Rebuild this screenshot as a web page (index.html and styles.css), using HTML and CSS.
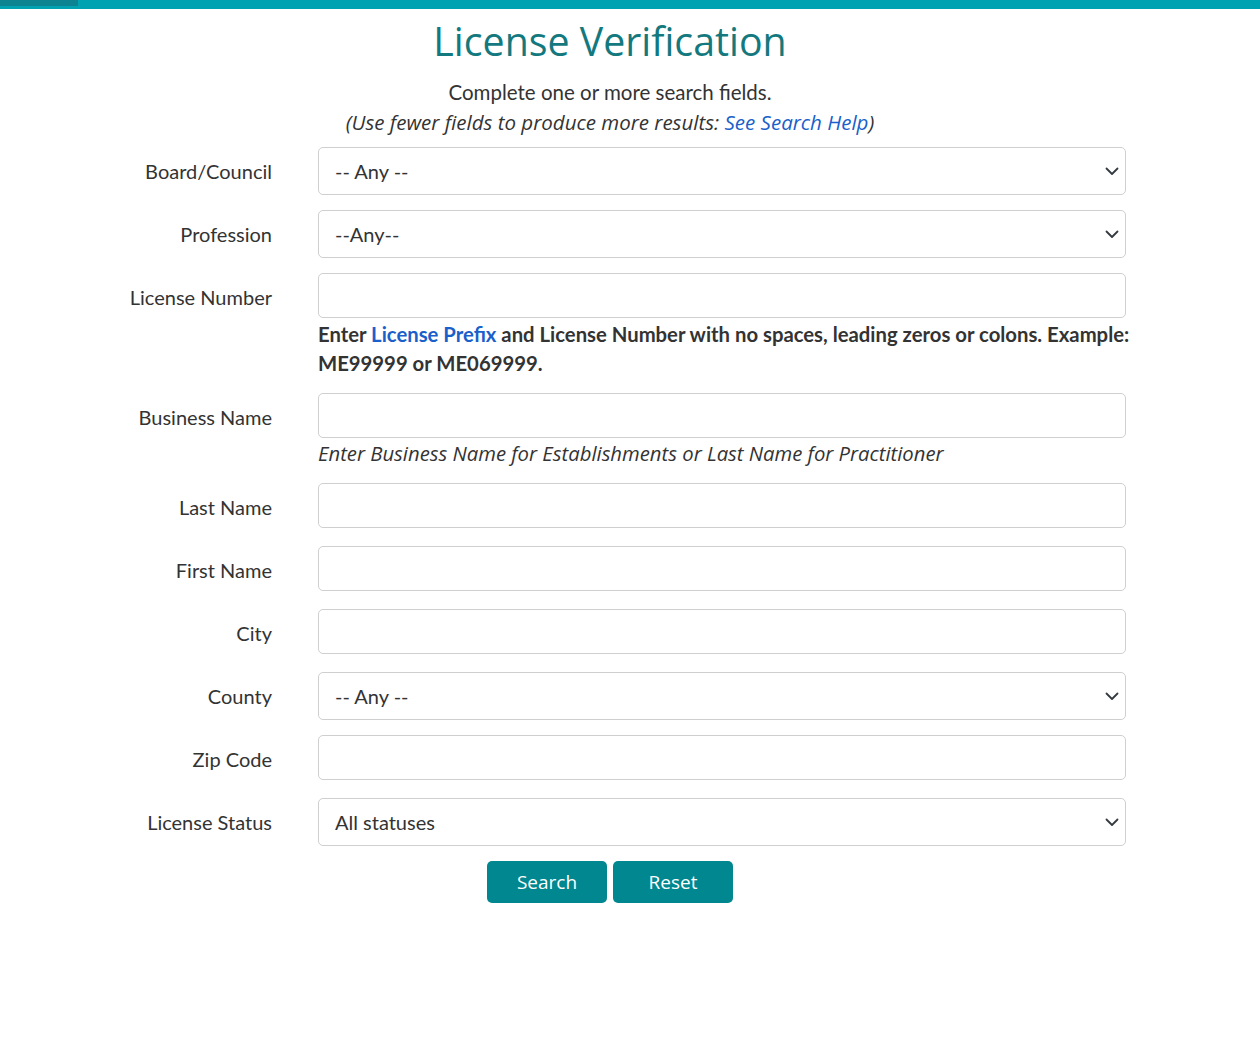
FILE: index.html
```html
<!DOCTYPE html>
<html lang="en">
<head>
<meta charset="utf-8">
<title>License Verification</title>
<link rel="stylesheet" href="styles.css">
</head>
<body>
<div class="topbar"><div class="topbar-accent"></div></div>
<main class="page">
  <h1 class="title">License Verification</h1>
  <p class="intro">Complete one or more search fields.</p>
  <p class="hint">(Use fewer fields to produce more results: <a href="#" class="link">See Search Help</a>)</p>

  <form class="form">
    <label class="label">Board/Council</label>
    <div class="field"><div class="select"><span>-- Any --</span><svg class="chev" viewBox="0 0 16 16"><path d="M2.5 5.5l5.5 5.5 5.5-5.5" fill="none" stroke="#343a40" stroke-width="1.8" stroke-linecap="round" stroke-linejoin="round"/></svg></div></div>

    <label class="label">Profession</label>
    <div class="field"><div class="select"><span>--Any--</span><svg class="chev" viewBox="0 0 16 16"><path d="M2.5 5.5l5.5 5.5 5.5-5.5" fill="none" stroke="#343a40" stroke-width="1.8" stroke-linecap="round" stroke-linejoin="round"/></svg></div></div>

    <label class="label">License Number</label>
    <div class="field">
      <div class="input"></div>
      <p class="help-bold">Enter <a href="#" class="link">License Prefix</a> and License Number with no spaces, leading zeros or colons. Example: ME99999 or ME069999.</p>
    </div>

    <label class="label">Business Name</label>
    <div class="field">
      <div class="input"></div>
      <p class="help-italic">Enter Business Name for Establishments or Last Name for Practitioner</p>
    </div>

    <label class="label">Last Name</label>
    <div class="field"><div class="input"></div></div>

    <label class="label">First Name</label>
    <div class="field"><div class="input"></div></div>

    <label class="label">City</label>
    <div class="field"><div class="input"></div></div>

    <label class="label">County</label>
    <div class="field"><div class="select"><span>-- Any --</span><svg class="chev" viewBox="0 0 16 16"><path d="M2.5 5.5l5.5 5.5 5.5-5.5" fill="none" stroke="#343a40" stroke-width="1.8" stroke-linecap="round" stroke-linejoin="round"/></svg></div></div>

    <label class="label">Zip Code</label>
    <div class="field"><div class="input"></div></div>

    <label class="label">License Status</label>
    <div class="field"><div class="select"><span>All statuses</span><svg class="chev" viewBox="0 0 16 16"><path d="M2.5 5.5l5.5 5.5 5.5-5.5" fill="none" stroke="#343a40" stroke-width="1.8" stroke-linecap="round" stroke-linejoin="round"/></svg></div></div>
  </form>

  <div class="buttons">
    <button class="btn" type="button">Search</button>
    <button class="btn" type="button">Reset</button>
  </div>
</main>
</body>
</html>
```

FILE: styles.css
```css
* { box-sizing: border-box; }
html, body { margin: 0; padding: 0; background: #fff; }
body {
  font-family: "Lato", "Noto Sans", sans-serif;
  color: #333;
  font-size: 20px;
}
.topbar {
  height: 9px;
  background: #00a1b0;
}
.topbar-accent {
  width: 78px;
  height: 6px;
  background: #0b8391;
}
.page {
  width: 1220px;
}
.title {
  margin: 11px 0 0;
  text-align: center;
  font-family: "Open Sans", "Noto Sans", sans-serif;
  font-weight: 400;
  font-size: 39.3px;
  line-height: 42px;
  color: #13797e;
}
.intro {
  margin: 15px 0 0;
  text-align: center;
  font-size: 20.5px;
  line-height: 30px;
}
.hint {
  margin: 0;
  text-align: center;
  font-family: "Open Sans", "Noto Sans", sans-serif;
  font-style: italic;
  font-size: 20.5px;
  line-height: 30px;
}
.link { color: #1a5fca; text-decoration: none; }
.form {
  margin: 10px 0 0 110px;
  display: grid;
  grid-template-columns: 162px 808px;
  column-gap: 46px;
  row-gap: 15px;
  align-items: start;
}
.label {
  text-align: right;
  line-height: 48px;
  height: 48px;
  white-space: nowrap;
}
.field { display: flex; flex-direction: column; }
.select, .input {
  border: 1px solid #cfcfcf;
  border-radius: 5px;
  background: #fff;
}
.select {
  height: 48px;
  display: flex;
  align-items: center;
  justify-content: space-between;
  padding: 0 5px 0 16px;
}
.input { height: 45px; }
.chev { width: 16px; height: 16px; }
.help-bold {
  margin: 0 -10px 0 0;
  font-weight: 700;
  font-size: 20.3px;
  line-height: 29px;
  padding-top: 2px;
}
.help-italic {
  margin: 0;
  font-family: "Open Sans", "Noto Sans", sans-serif;
  font-style: italic;
  font-size: 20.3px;
  line-height: 30px;
}
.buttons {
  margin-top: 15px;
  display: flex;
  justify-content: center;
  gap: 6px;
}
.btn {
  width: 120px;
  height: 42px;
  border: none;
  border-radius: 5px;
  background: #00878f;
  color: #fff;
  font-family: "Open Sans", "Noto Sans", sans-serif;
  font-size: 19px;
}
```
